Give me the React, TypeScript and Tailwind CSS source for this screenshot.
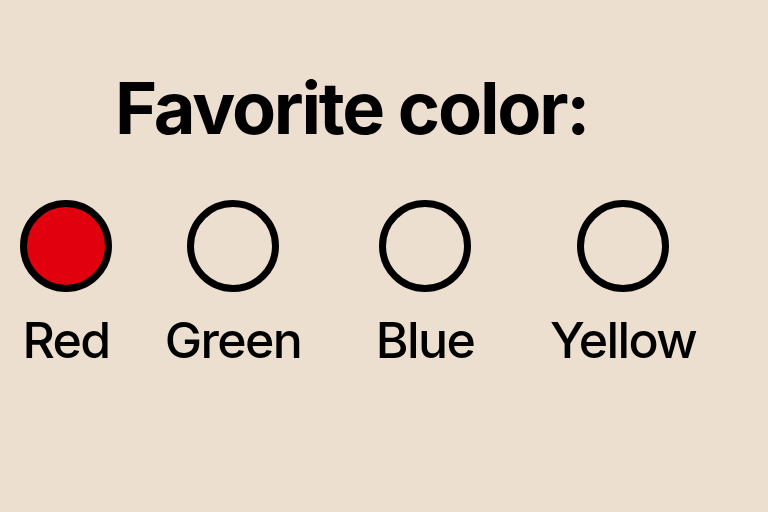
const options = [
  { label: 'Red', selected: true, ml: 'ml-0' },
  { label: 'Green', selected: false, ml: 'ml-[47px]' },
  { label: 'Blue', selected: false, ml: 'ml-[72px]' },
  { label: 'Yellow', selected: false, ml: 'ml-[78px]' },
];

export default function App() {
  return (
    <div
      className="w-[768px] h-[512px] bg-[#ecdfd0] text-black overflow-hidden"
      style={{ fontFamily: 'Inter, "Liberation Sans", sans-serif' }}
    >
      <h1 className="pt-[71px] pl-[115px] text-[72px] leading-[74px] font-bold tracking-[-2.2px]">
        Favorite color:
      </h1>

      <div className="flex pl-[6px] mt-[55px]">
        {options.map((opt) => (
          <div key={opt.label} className={`w-[120px] flex flex-col items-center ${opt.ml}`}>
            <div
              className={`w-[92px] h-[92px] rounded-full border-[7px] border-black ${
                opt.selected ? 'bg-[#e0000e]' : 'bg-transparent'
              }`}
            />
            <span className="mt-[22px] text-[50px] leading-[52px] font-medium tracking-[-1.6px]">{opt.label}</span>
          </div>
        ))}
      </div>
    </div>
  );
}
